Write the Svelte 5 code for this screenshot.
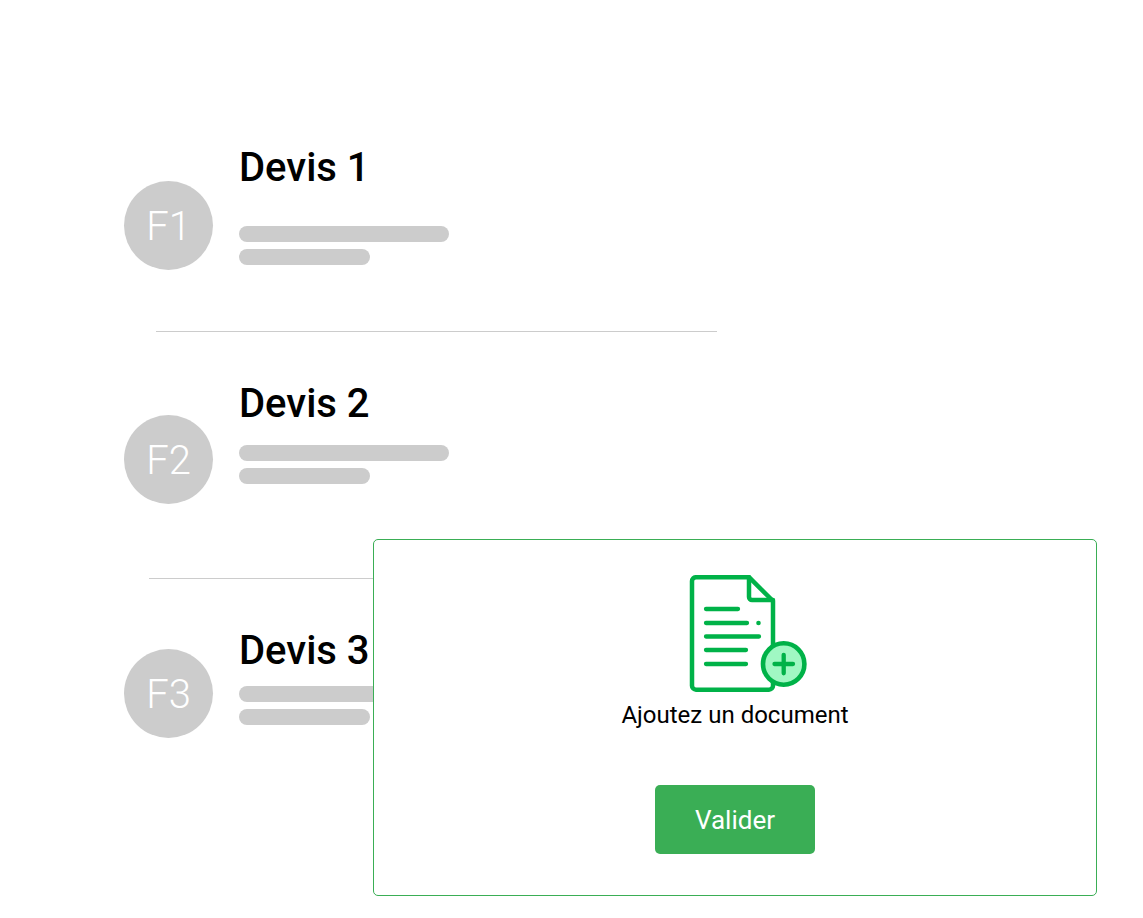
<script lang="ts">
  type Quote = { title: string; initials: string; spacing: string };

  let {
    quotes = [
      { title: "Devis 1", initials: "F1", spacing: "roomy" },
      { title: "Devis 2", initials: "F2", spacing: "regular" },
      { title: "Devis 3", initials: "F3", spacing: "tight" },
    ],
    onValidate,
  }: {
    quotes?: Quote[];
    onValidate?: () => void;
  } = $props();
</script>

<main class="page">
  <ul class="quotes">
    {#each quotes as quote (quote.title)}
      <li class="quote {quote.spacing}">
        <div class="avatar">{quote.initials}</div>
        <div class="body">
          <h2>{quote.title}</h2>
          <div class="bars">
            <span class="bar"></span>
            <span class="bar short"></span>
          </div>
        </div>
      </li>
    {/each}
  </ul>

  <section class="panel">
    <svg class="doc-icon" viewBox="0 0 144 118" fill="none" stroke="#00b248" stroke-linecap="round" stroke-linejoin="round" aria-hidden="true">
      <g stroke-width="4.5">
        <path d="M86 2.200H33a4 4 0 0 0-4 4v104.500a4 4 0 0 0 4 4h73a4 4 0 0 0 4-4V26z" />
        <path d="M86 2.200V22a3 3 0 0 0 3 3H110" />
      </g>
      <path d="M43 34h32M43 48h41M43 61.500h53M43 75h40M43 89h40" stroke-width="4.300" />
      <circle cx="95.500" cy="48" r="2.300" fill="#00b248" stroke="none" />
      <circle cx="120.700" cy="89" r="20.700" fill="#a0f8c3" stroke-width="4.600" />
      <path d="M111.500 89h18.500M120.700 79.800v18.500" stroke-width="4.300" />
    </svg>
    <p>Ajoutez un document</p>
    <button type="button" onclick={onValidate}>Valider</button>
  </section>
</main>

<style>
  :global(body) {
    margin: 0;
    background: #fff;
  }

  .page {
    position: relative;
    min-height: 100vh;
    box-sizing: border-box;
    padding: 143px 46px 0 124px;
    font-family: Roboto, sans-serif;
    color: #000;
  }

  .quotes {
    list-style: none;
    margin: 0;
    padding: 0;
    max-width: 593px;
  }

  .quote {
    display: grid;
    grid-template-columns: 89px 1fr;
    column-gap: 26px;
  }

  .quote::after {
    content: "";
    grid-column: 1 / -1;
    height: 1px;
    background: #ccc;
  }

  .quote:last-child::after {
    display: none;
  }

  .avatar {
    width: 89px;
    height: 89px;
    border-radius: 50%;
    background: #ccc;
    color: #fff;
    font-size: 40px;
    font-weight: 300;
    line-height: 91px;
    text-align: center;
  }

  h2 {
    margin: 0;
    font-size: 40px;
    font-weight: 500;
    line-height: 50px;
  }

  .bars {
    display: flex;
    flex-direction: column;
    gap: 7px;
  }

  .bar {
    width: 210px;
    height: 16px;
    border-radius: 8px;
    background: #ccc;
  }

  .bar.short {
    width: 131px;
  }

  /* Each row has its own rhythm between title, avatar and divider. */
  .roomy .avatar {
    margin-top: 38px;
  }
  .roomy .bars {
    margin-top: 33px;
  }
  .roomy::after {
    margin: 61px 0 47px 32px;
  }

  .regular .avatar {
    margin-top: 36px;
  }
  .regular .bars {
    margin-top: 16px;
  }
  .regular::after {
    margin: 74px 0 47px 25px;
  }

  .tight .avatar {
    margin-top: 23px;
  }
  .tight .bars {
    margin-top: 10px;
  }

  /* Floats over the lower part of the list. */
  .panel {
    position: absolute;
    top: 539px;
    left: 373px;
    right: 46px;
    box-sizing: border-box;
    display: flex;
    flex-direction: column;
    align-items: center;
    padding: 35px 24px 41px;
    border: 1px solid #3aae55;
    border-radius: 5px;
    background: #fff;
  }

  .doc-icon {
    width: 144px;
    height: 118px;
  }

  .panel p {
    margin: 8px 0 56px;
    font-size: 24px;
    line-height: 28px;
  }

  button {
    padding: 20px 40px 19px;
    border: none;
    border-radius: 5px;
    background: #3aae55;
    color: #fff;
    font-family: inherit;
    font-size: 26px;
    line-height: 30px;
    cursor: pointer;
  }
</style>
